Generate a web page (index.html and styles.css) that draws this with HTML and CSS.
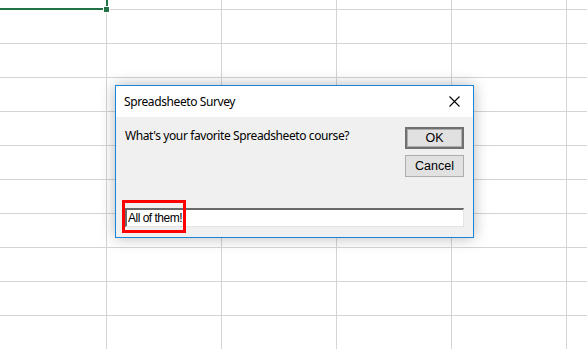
FILE: index.html
```html
<!DOCTYPE html>
<html lang="en">
<head>
    <meta charset="UTF-8">
    <title>Spreadsheeto Survey</title>
    <link rel="stylesheet" href="styles.css">
</head>
<body>

<div class="sheet">
    <div class="selection"></div>
    <div class="handle"></div>

    <div class="dialog">
        <div class="title-bar">
            <span class="title">Spreadsheeto Survey</span>
            <svg class="close" width="11" height="11" viewBox="0 0 11 11">
                <path d="M0.5 0.5 L10.5 10.5 M10.5 0.5 L0.5 10.5" stroke="#000" stroke-width="1.1" fill="none"/>
            </svg>
        </div>
        <div class="dialog-body">
            <div class="top-row">
                <p class="prompt">What's your favorite Spreadsheeto course?</p>
                <div class="buttons">
                    <button class="btn default">OK</button>
                    <button class="btn">Cancel</button>
                </div>
            </div>
            <div class="answer">
                <input type="text" value="All of them!">
                <div class="highlight"></div>
            </div>
        </div>
    </div>
</div>

</body>
</html>
```

FILE: styles.css
```css
html, body {
    margin: 0;
    height: 100%;
    overflow: hidden;
}
.sheet {
    position: relative;
    width: 100%;
    height: 100%;
    background-color: #fff;
    background-image:
        linear-gradient(to right, #d4d4d4 1px, transparent 1px),
        linear-gradient(to bottom, #d4d4d4 1px, transparent 1px);
    background-size: 115px 100%, 100% 34px;
    background-position: 106px 0, 0 9px;
}
.selection {
    position: absolute;
    left: 0;
    top: 0;
    width: 106px;
    height: 8px;
    border-bottom: 2px solid #217346;
    border-right: 2px solid #217346;
}
.handle {
    position: absolute;
    left: 103px;
    top: 6px;
    width: 5px;
    height: 5px;
    background: #217346;
    border: 1px solid #fff;
}
.dialog {
    position: absolute;
    left: 115px;
    top: 85px;
    width: 357px;
    height: 151px;
    border: 1px solid #1883d7;
    background: #f0f0f0;
    box-shadow: 0 0 14px rgba(0, 0, 0, 0.28);
    font-family: "Noto Sans", "Open Sans", sans-serif;
    font-size: 12px;
    letter-spacing: -0.4px;
    color: #000;
    display: flex;
    flex-direction: column;
}
.title-bar {
    height: 31px;
    background: #fff;
    display: flex;
    align-items: center;
    justify-content: space-between;
    padding: 0 13px 0 8px;
}
.title {
    font-size: 12px;
}
.dialog-body {
    flex: 1;
    padding: 8px 9px 9px 8px;
    display: flex;
    flex-direction: column;
    justify-content: space-between;
}
.top-row {
    display: flex;
    justify-content: space-between;
    align-items: flex-start;
}
.prompt {
    margin: 2px 0 0 1px;
    font-size: 12px;
}
.buttons {
    display: flex;
    flex-direction: column;
    gap: 6px;
    margin-top: 2px;
}
.btn {
    width: 59px;
    height: 22px;
    background: #e1e1e1;
    border: 1px solid #adadad;
    font-family: "Liberation Sans", Arial, sans-serif;
    font-size: 12.5px;
    letter-spacing: 0;
    padding: 0;
    color: #000;
}
.btn.default {
    border: 2px solid #707070;
    box-shadow: inset 0 0 0 1px #adadad;
}
.answer {
    position: relative;
    margin-bottom: 1px;
}
.answer input {
    box-sizing: border-box;
    width: 339px;
    height: 19px;
    margin-left: 1px;
    padding: 0 1px;
    border-style: solid;
    border-width: 2px 1px 1px 2px;
    border-color: #696969 #e3e3e3 #e3e3e3 #696969;
    background: #fff;
    font-family: "Liberation Sans", Arial, sans-serif;
    font-size: 12px;
    letter-spacing: -0.5px;
    color: #000;
    outline: none;
}
.highlight {
    position: absolute;
    left: -2px;
    top: -8px;
    width: 58px;
    height: 27px;
    border: 3px solid #ff0000;
}
```
